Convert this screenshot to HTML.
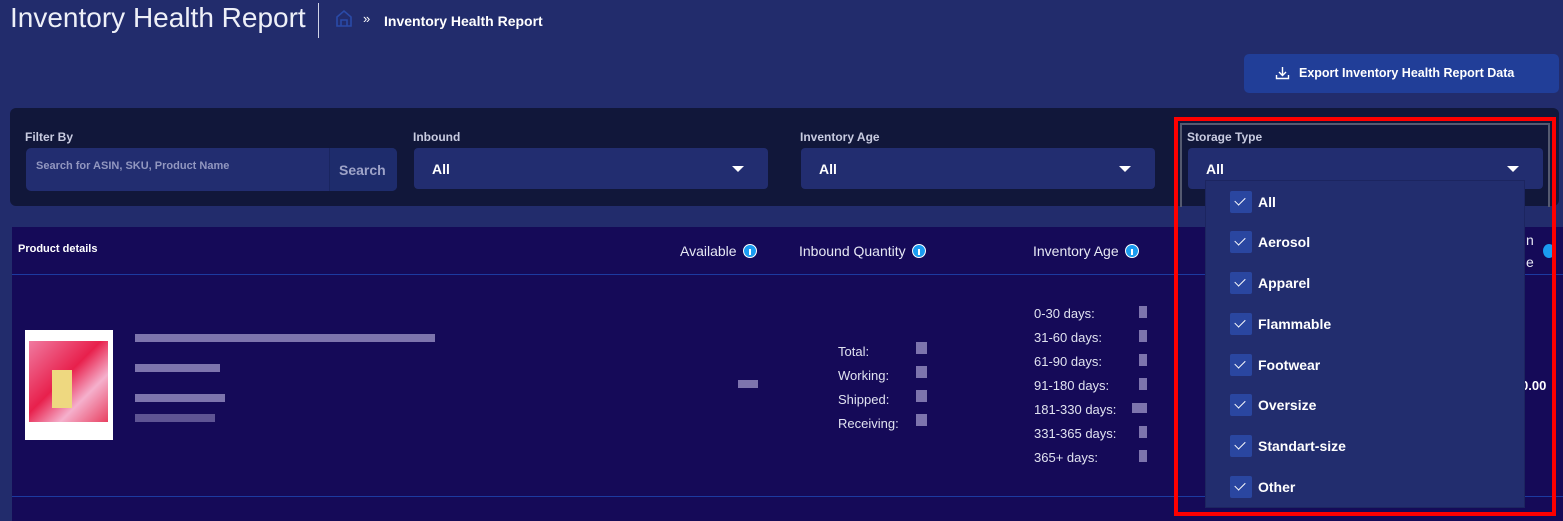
<!DOCTYPE html>
<html><head><style>
*{margin:0;padding:0;box-sizing:border-box}
body{width:1563px;height:521px;background:#222c6c;font-family:"Liberation Sans",sans-serif;color:#fff;position:relative;overflow:hidden}
.a{position:absolute}
.lbl{font-size:12px;font-weight:bold;color:#c8cbe0}
.sel{background:#222d70;border-radius:4px;height:41px;font-weight:bold;font-size:14px;padding:13px 0 0 18px}
.caret{position:absolute;right:24px;top:18px;width:0;height:0;border-left:6px solid transparent;border-right:6px solid transparent;border-top:6px solid #fff}
.th{font-size:14px;color:#e6e8f4}
.info{display:inline-block;width:14px;height:14px;border-radius:50%;background:#1a9cf0;border:1px solid #fff;vertical-align:-2px;margin-left:6px;position:relative}
.info:after{content:"";position:absolute;left:5px;top:4px;width:2px;height:6px;background:#fff}
.bar{position:absolute;height:8px;background:#7d74ad}
.cb{position:absolute;left:1230px;width:22px;height:22px;background:#2a46a0;border-radius:2px}
.cb:after{content:"";position:absolute;left:7px;top:4px;width:5px;height:9px;border:solid #fff;border-width:0 1.5px 1.5px 0;transform:rotate(45deg)}
.opt{position:absolute;left:1258px;font-size:14px;font-weight:bold}
.cell{font-size:13px;color:#e0e2f0}
</style></head><body>
<div class="a" style="left:10px;top:2px;font-size:28px;color:#eef0f8">Inventory Health Report</div>
<div class="a" style="left:318px;top:3px;width:1px;height:35px;background:#d0d4e8"></div>
<svg class="a" style="left:335px;top:9px" width="18" height="18" viewBox="0 0 18 18"><path d="M2 8 L9 2 L16 8 V17 H2 Z M6 17 V11 H12 V17" fill="none" stroke="#2a4aa8" stroke-width="1.6"/></svg>
<div class="a" style="left:363px;top:11px;font-size:13px;color:#fff">»</div>
<div class="a" style="left:384px;top:13px;font-size:14px;font-weight:bold">Inventory Health Report</div>

<div class="a" style="left:1244px;top:54px;width:315px;height:39px;background:#213e98;border-radius:5px"></div>
<svg class="a" style="left:1275px;top:66px" width="15" height="14" viewBox="0 0 15 14"><path d="M7.5 1 V9 M4 6 L7.5 9.5 L11 6 M1.5 9 V12.5 H13.5 V9" fill="none" stroke="#fff" stroke-width="1.4"/></svg>
<div class="a" style="left:1299px;top:66px;font-size:12.5px;font-weight:bold">Export Inventory Health Report Data</div>

<div class="a" style="left:10px;top:108px;width:1549px;height:98px;background:#11173a;border-radius:6px"></div>
<div class="a lbl" style="left:25px;top:130px">Filter By</div>
<div class="a" style="left:26px;top:148px;width:371px;height:43px;background:#222d70;border-radius:5px;overflow:hidden">
 <div class="a" style="left:10px;top:12px;font-size:11px;color:#9297c0;font-weight:bold">Search for ASIN, SKU, Product Name</div>
 <div class="a" style="left:303px;top:0;width:68px;height:43px;background:#1e2c6c;border-left:1px solid #1a2560;color:#9ea3c8;font-size:14px;font-weight:bold;padding:14px 0 0 9px">Search</div>
</div>
<div class="a lbl" style="left:413px;top:130px">Inbound</div>
<div class="a sel" style="left:414px;top:148px;width:354px">All<div class="caret"></div></div>
<div class="a lbl" style="left:800px;top:130px">Inventory Age</div>
<div class="a sel" style="left:801px;top:148px;width:354px">All<div class="caret"></div></div>

<div class="a" style="left:1180px;top:123px;width:370px;height:84px;border:2px solid #555a70;border-bottom:none"></div>
<div class="a" style="left:12px;top:227px;width:1551px;height:294px;background:#150a58"></div>
<div class="a" style="left:12px;top:274px;width:1551px;height:1px;background:#1c3aa0"></div>
<div class="a" style="left:12px;top:496px;width:1551px;height:1px;background:#1c3aa0"></div>
<div class="a" style="left:18px;top:243px;font-size:11px;font-weight:bold">Product details</div>
<div class="a th" style="left:680px;top:243px">Available<span class="info"></span></div>
<div class="a th" style="left:799px;top:243px">Inbound Quantity<span class="info"></span></div>
<div class="a th" style="left:1033px;top:243px">Inventory Age<span class="info"></span></div>
<div class="a th" style="left:1526px;top:232px">n</div>
<div class="a th" style="left:1526px;top:254px">e</div>
<div class="a" style="left:1543px;top:244px;width:12px;height:14px;border-radius:50%;background:#1a9cf0"></div>
<div class="a" style="left:1521px;top:378px;font-size:13px;font-weight:bold">0.00</div>

<div class="a" style="left:25px;top:330px;width:88px;height:110px;background:#fff"></div>
<div class="a" style="left:29px;top:341px;width:79px;height:81px;background:linear-gradient(135deg,#f07aa0,#e8204c 45%,#f5b0cc 70%,#e84060)"></div>
<div class="a" style="left:52px;top:370px;width:20px;height:38px;background:#eed880"></div>
<div class="bar" style="left:135px;top:334px;width:300px"></div>
<div class="bar" style="left:135px;top:364px;width:85px"></div>
<div class="bar" style="left:135px;top:394px;width:90px"></div>
<div class="bar" style="left:135px;top:414px;width:80px;opacity:.7"></div>
<div class="bar" style="left:738px;top:380px;width:20px"></div>

<div class="a cell" style="left:838px;top:340px;line-height:24px">Total:<br>Working:<br>Shipped:<br>Receiving:</div>
<div class="bar" style="left:916px;top:342px;width:11px;height:12px"></div>
<div class="bar" style="left:916px;top:366px;width:11px;height:12px"></div>
<div class="bar" style="left:916px;top:390px;width:11px;height:12px"></div>
<div class="bar" style="left:916px;top:414px;width:11px;height:12px"></div>
<div class="a cell" style="left:1034px;top:302px;line-height:24px">0-30 days:<br>31-60 days:<br>61-90 days:<br>91-180 days:<br>181-330 days:<br>331-365 days:<br>365+ days:</div>
<div class="bar" style="left:1139px;top:306px;width:8px;height:12px"></div>
<div class="bar" style="left:1139px;top:330px;width:8px;height:12px"></div>
<div class="bar" style="left:1139px;top:354px;width:8px;height:12px"></div>
<div class="bar" style="left:1139px;top:378px;width:8px;height:12px"></div>
<div class="bar" style="left:1132px;top:403px;width:15px;height:10px"></div>
<div class="bar" style="left:1139px;top:426px;width:8px;height:12px"></div>
<div class="bar" style="left:1139px;top:450px;width:8px;height:12px"></div>

<div class="a lbl" style="left:1187px;top:130px">Storage Type</div>
<div class="a sel" style="left:1188px;top:148px;width:355px">All<div class="caret"></div></div>
<div class="a" style="left:1205px;top:180px;width:320px;height:328px;background:#222d6e;border:1px solid #1c2560"></div>
<div class="cb" style="top:191px"></div><div class="opt" style="top:194px">All</div>
<div class="cb" style="top:231px"></div><div class="opt" style="top:234px">Aerosol</div>
<div class="cb" style="top:272px"></div><div class="opt" style="top:275px">Apparel</div>
<div class="cb" style="top:313px"></div><div class="opt" style="top:316px">Flammable</div>
<div class="cb" style="top:354px"></div><div class="opt" style="top:357px">Footwear</div>
<div class="cb" style="top:394px"></div><div class="opt" style="top:397px">Oversize</div>
<div class="cb" style="top:435px"></div><div class="opt" style="top:438px">Standart-size</div>
<div class="cb" style="top:476px"></div><div class="opt" style="top:479px">Other</div>
<div class="a" style="left:1174px;top:117px;width:382px;height:399px;border:4px solid #ff0000"></div>
</body></html>
